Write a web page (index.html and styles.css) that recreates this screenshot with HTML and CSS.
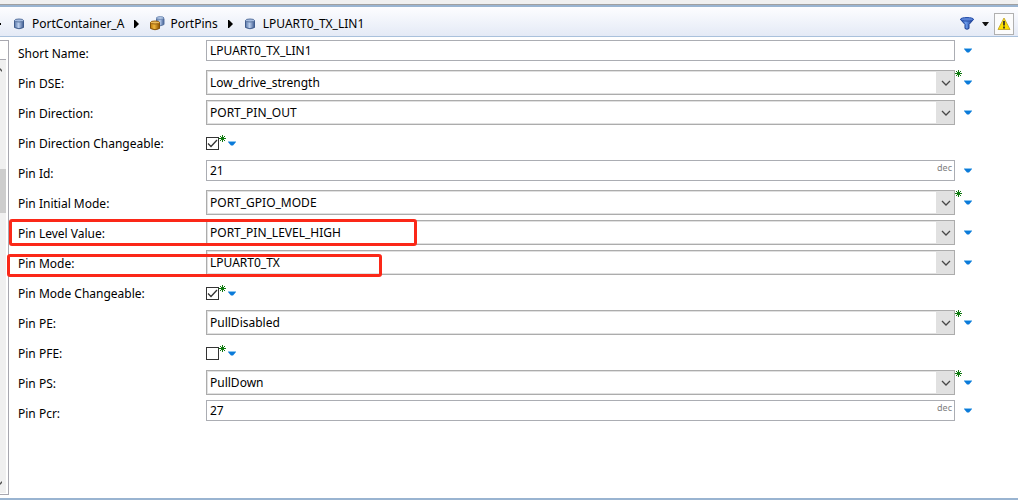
FILE: index.html
```html
<!DOCTYPE html>
<html lang="en">
<head>
<meta charset="utf-8">
<title>PortPins configuration</title>
<link rel="stylesheet" href="styles.css">
</head>
<body>
<svg class="defs" aria-hidden="true">
  <defs>
    <linearGradient id="blue"><stop offset="0" stop-color="#5876a8"/><stop offset=".45" stop-color="#b9cdec"/><stop offset="1" stop-color="#3f5c92"/></linearGradient>
    <linearGradient id="gold"><stop offset="0" stop-color="#b87508"/><stop offset=".4" stop-color="#f0b63c"/><stop offset="1" stop-color="#8b5200"/></linearGradient>
    <linearGradient id="funnel"><stop offset="0" stop-color="#173c9c"/><stop offset=".4" stop-color="#70a0f0"/><stop offset="1" stop-color="#082880"/></linearGradient>
    <symbol id="cylinder" viewBox="0 0 12 12"><path d="M1.500 2.500v7Q6 12 10.500 9.500v-7z" fill="url(#blue)" stroke="#405c8d"/><ellipse cx="6" cy="2.500" rx="4.500" ry="1.500" fill="#a6bce0" stroke="#58739f"/></symbol>
    <symbol id="menu" viewBox="0 0 8 5"><path d="M0 0h8v1H0z" fill="#8ac5f0"/><path d="M0 1h8L5 4.500H3z" fill="#0b7bd9"/></symbol>
    <symbol id="star" viewBox="0 0 7 7"><path d="M3.500 0v7M0 3.500h7M1 1l5 5M6 1L1 6" stroke="#107a10" stroke-width="1"/></symbol>
    <symbol id="chevron" viewBox="0 0 10 6"><path d="M1 1l4 4 4-4" fill="none" stroke="#484848" stroke-width="1.300"/></symbol>
    <symbol id="next" viewBox="0 0 5 8"><path d="M0 0h1l4 4-4 4H0z" fill="#000"/></symbol>
  </defs>
</svg>
<div class="window">
  <header class="toolbar">
    <nav class="crumbs" aria-label="Breadcrumb">
      <span class="cut"></span>
      <a href="#container"><svg class="node"><use href="#cylinder"/></svg>PortContainer_A</a>
      <svg class="next"><use href="#next"/></svg>
      <a class="group" href="#pins"><svg class="nodes" viewBox="0 0 15 15"><path d="M6.500 2.500v6Q10 11 14 8.500v-6z" fill="url(#blue)" stroke="#58739f"/><ellipse cx="10.200" cy="2" rx="3.800" ry="1.300" fill="#c2d3ee" stroke="#6985b0"/><path d="M.5 6.500v6Q5 15 9.500 12.500v-6z" fill="url(#gold)" stroke="#825009"/><ellipse cx="5" cy="6.500" rx="4.500" ry="1.500" fill="#edbc59" stroke="#976010"/></svg>PortPins</a>
      <svg class="next"><use href="#next"/></svg>
      <a href="#pin"><svg class="node"><use href="#cylinder"/></svg>LPUART0_TX_LIN1</a>
    </nav>
    <div class="tools">
      <button class="tool" aria-label="Filter"><svg width="14" height="13" viewBox="0 0 14 13"><path d="M.5 2.500L5 7.500v4q2 1.500 4 0v-4l4.500-5z" fill="url(#funnel)" stroke="#1a3d92"/><ellipse cx="7" cy="2.300" rx="6.500" ry="1.800" fill="#5b83d6" stroke="#2850aa"/></svg></button>
      <button class="tool" aria-label="Filter options"><svg width="8" height="4" viewBox="0 0 8 4"><path d="M0 0h7L4 4H3z" fill="#111"/></svg></button>
      <button class="tool warning" aria-label="Warnings"><svg width="14" height="14" viewBox="0 0 14 14"><path d="M7 1L13 12.500H1z" fill="#ffe100" stroke="#c9ad32" stroke-linejoin="round"/><path d="M6 4h2v4.500H6zM6 9.500h2v2H6z" fill="#4c4423"/></svg></button>
    </div>
  </header>
  <div class="content">
    <aside class="list">
      <div class="list-head"></div>
      <div class="scroll">
        <svg width="2" height="4" viewBox="0 0 2 4"><path d="M0 0l2 2v2L0 2z" fill="#505050"/></svg>
        <div class="thumb"></div>
        <svg width="2" height="4" viewBox="0 0 2 4"><path d="M0 4l2-2V0L0 2z" fill="#505050"/></svg>
      </div>
    </aside>
    <form class="form">
      <div class="row">
        <label for="name">Short Name:</label>
        <div class="field"><input class="text" id="name" value="LPUART0_TX_LIN1"></div>
        <div class="marks short"><button type="button" class="menu" aria-label="Short Name options"><svg><use href="#menu"/></svg></button></div>
      </div>
      <div class="row">
        <label for="dse">Pin DSE:</label>
        <div class="field"><select id="dse"><option>Low_drive_strength</option></select><svg class="chevron"><use href="#chevron"/></svg></div>
        <div class="marks"><svg class="star"><use href="#star"/></svg><button type="button" class="menu" aria-label="Pin DSE options"><svg><use href="#menu"/></svg></button></div>
      </div>
      <div class="row">
        <label for="dir">Pin Direction:</label>
        <div class="field"><select id="dir"><option>PORT_PIN_OUT</option></select><svg class="chevron"><use href="#chevron"/></svg></div>
        <div class="marks"><button type="button" class="menu" aria-label="Pin Direction options"><svg><use href="#menu"/></svg></button></div>
      </div>
      <div class="row">
        <label for="dirchg">Pin Direction Changeable:</label>
        <div class="check"><span class="tick"><input type="checkbox" id="dirchg" checked><svg viewBox="0 0 11 11"><path d="M1 5.500l3 3L10 2"/></svg></span><div class="marks"><svg class="star"><use href="#star"/></svg><button type="button" class="menu" aria-label="Pin Direction Changeable options"><svg><use href="#menu"/></svg></button></div></div>
      </div>
      <div class="row">
        <label for="pinid">Pin Id:</label>
        <div class="field"><input class="text" id="pinid" value="21"><span class="unit">dec</span></div>
        <div class="marks short"><button type="button" class="menu" aria-label="Pin Id options"><svg><use href="#menu"/></svg></button></div>
      </div>
      <div class="row">
        <label for="init">Pin Initial Mode:</label>
        <div class="field"><select id="init"><option>PORT_GPIO_MODE</option></select><svg class="chevron"><use href="#chevron"/></svg></div>
        <div class="marks"><svg class="star"><use href="#star"/></svg><button type="button" class="menu" aria-label="Pin Initial Mode options"><svg><use href="#menu"/></svg></button></div>
      </div>
      <div class="row">
        <label for="level">Pin Level Value:</label>
        <div class="field"><select id="level"><option>PORT_PIN_LEVEL_HIGH</option></select><svg class="chevron"><use href="#chevron"/></svg></div>
        <div class="marks"><button type="button" class="menu" aria-label="Pin Level Value options"><svg><use href="#menu"/></svg></button></div>
        <div class="highlight level"></div>
      </div>
      <div class="row">
        <label for="mode">Pin Mode:</label>
        <div class="field"><select id="mode"><option>LPUART0_TX</option></select><svg class="chevron"><use href="#chevron"/></svg></div>
        <div class="marks"><button type="button" class="menu" aria-label="Pin Mode options"><svg><use href="#menu"/></svg></button></div>
        <div class="highlight mode"></div>
      </div>
      <div class="row">
        <label for="modechg">Pin Mode Changeable:</label>
        <div class="check"><span class="tick"><input type="checkbox" id="modechg" checked><svg viewBox="0 0 11 11"><path d="M1 5.500l3 3L10 2"/></svg></span><div class="marks"><svg class="star"><use href="#star"/></svg><button type="button" class="menu" aria-label="Pin Mode Changeable options"><svg><use href="#menu"/></svg></button></div></div>
      </div>
      <div class="row">
        <label for="pe">Pin PE:</label>
        <div class="field"><select id="pe"><option>PullDisabled</option></select><svg class="chevron"><use href="#chevron"/></svg></div>
        <div class="marks"><svg class="star"><use href="#star"/></svg><button type="button" class="menu" aria-label="Pin PE options"><svg><use href="#menu"/></svg></button></div>
      </div>
      <div class="row">
        <label for="pfe">Pin PFE:</label>
        <div class="check"><span class="tick"><input type="checkbox" id="pfe"><svg viewBox="0 0 11 11"><path d="M1 5.500l3 3L10 2"/></svg></span><div class="marks"><svg class="star"><use href="#star"/></svg><button type="button" class="menu" aria-label="Pin PFE options"><svg><use href="#menu"/></svg></button></div></div>
      </div>
      <div class="row">
        <label for="ps">Pin PS:</label>
        <div class="field"><select id="ps"><option>PullDown</option></select><svg class="chevron"><use href="#chevron"/></svg></div>
        <div class="marks"><svg class="star"><use href="#star"/></svg><button type="button" class="menu" aria-label="Pin PS options"><svg><use href="#menu"/></svg></button></div>
      </div>
      <div class="row">
        <label for="pcr">Pin Pcr:</label>
        <div class="field"><input class="text" id="pcr" value="27"><span class="unit">dec</span></div>
        <div class="marks short"><button type="button" class="menu" aria-label="Pin Pcr options"><svg><use href="#menu"/></svg></button></div>
      </div>
    </form>
  </div>
</div>
</body>
</html>
```
FILE: styles.css
```css
* { box-sizing: border-box; }
body { margin: 0; background: #fff; }
body, input, select, button { font: 12px/16px "Noto Sans", "Open Sans", sans-serif; color: #000; }
svg { display: block; flex: none; }
button { border: 0; padding: 0; background: none; }
.defs { position: absolute; width: 0; height: 0; }

.window {
  display: flex;
  flex-direction: column;
  min-height: 100vh;
  border-top: 4px solid #f0f0f0;
  border-bottom: 2px solid #99b4d1;
}
.toolbar {
  display: flex;
  justify-content: space-between;
  align-items: center;
  height: 33px;
  padding: 6px 4px 0 0;
  border-top: 1px solid #a0a0a0;
  border-bottom: 1px solid #a9c1dc;
  background: linear-gradient(#99b4d1 2px, #fdfdff 2px, #e4eaf6);
}
.crumbs { display: flex; align-items: center; }
.crumbs a { display: flex; align-items: center; gap: 7px; color: inherit; text-decoration: none; }
.crumbs .group { gap: 5px; }
.cut { width: 1px; height: 2px; margin-right: 12px; background: #000; }
.node { width: 12px; height: 12px; }
.nodes { width: 15px; height: 15px; }
.next { width: 5px; height: 8px; margin: 0 11px 0 10px; }
.tools { display: flex; align-items: center; }
.tool { display: flex; align-items: center; margin-left: 8px; }
.warning {
  justify-content: center;
  width: 20px;
  height: 22px;
  margin-left: 4px;
  border: 1px solid #b0b0b0;
  background: #fcfcfc;
}

.content { display: flex; flex: 1; padding: 3px 0; }
.list {
  display: flex;
  flex-direction: column;
  flex: none;
  width: 9px;
  border: solid #a8a8b0;
  border-width: 1px 1px 1px 0;
  padding: 0 2px 1px 0;
}
.list-head { height: 19px; border-bottom: 1px solid #a8a8b0; }
.scroll { display: flex; flex-direction: column; flex: 1; padding: 8px 0; background: #f0f0f0; }
.thumb { height: 44px; margin: 97px 0 auto; background: #cdcdcd; }

.form { flex: 1; padding-left: 9px; }
.row {
  position: relative;
  display: grid;
  grid-template-columns: 188px 1fr 63px;
  align-items: start;
  height: 30px;
}
.row > label { padding-top: 6px; }
.field { position: relative; }
.text, select {
  display: block;
  width: 100%;
  margin: 0;
  border: 1px solid #abadb3;
  border-radius: 0;
  background: #fff;
  outline: 0;
}
.text { height: 21px; padding: 0 3px; }
select {
  height: 25px;
  padding: 0 20px 0 3px;
  appearance: none;
  border-color: #acacac;
  box-shadow: inset 0 0 0 1px #e1e1e1;
  background: linear-gradient(#e1e1e1, #e1e1e1) right / 18px 100% no-repeat #fff;
}
.chevron { position: absolute; right: 4px; top: 10px; width: 10px; height: 6px; pointer-events: none; }
.unit { position: absolute; right: 3px; top: 2px; font-size: 9px; line-height: 12px; color: #808080; }
.marks { display: grid; grid-template-columns: 7px 8px; column-gap: 2px; align-items: start; }
.star { width: 7px; height: 7px; grid-area: 1 / 1; }
.menu { grid-area: 1 / 2; padding-top: 10px; }
.menu svg { width: 8px; height: 5px; }
.short .menu { padding-top: 8px; }
.check { display: flex; padding-top: 5px; }
.tick { position: relative; margin-top: 2px; }
.tick input {
  display: block;
  appearance: none;
  width: 13px;
  height: 13px;
  margin: 0;
  border: 1px solid #333;
  background: #fff;
}
.tick svg { position: absolute; left: 1px; top: 1px; width: 11px; height: 11px; pointer-events: none; visibility: hidden; }
.tick input:checked + svg { visibility: visible; }
.tick path { fill: none; stroke: #333; stroke-width: 1.300; }
.check .menu { padding-top: 6px; }
.highlight { position: absolute; border: 3px solid #fb2818; border-radius: 3px; pointer-events: none; }
.highlight.level { left: -9px; top: -1px; width: 408px; height: 27px; }
.highlight.mode { left: -11px; top: 4px; width: 375px; height: 23px; }
```
